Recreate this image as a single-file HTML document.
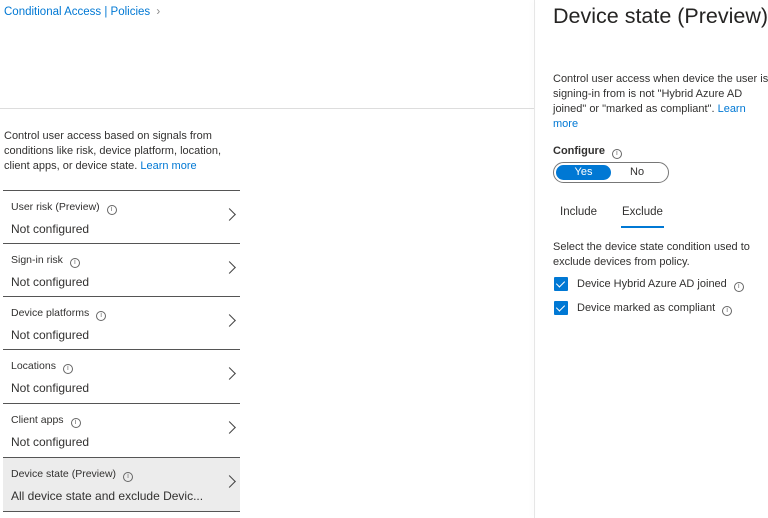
<!DOCTYPE html>
<html><head><style>
*{margin:0;padding:0;box-sizing:border-box}
body{width:768px;height:518px;overflow:hidden;background:#fff;font-family:"Liberation Sans",sans-serif;color:#323130;position:relative;font-size:11px}
.a{position:absolute}
.blue{color:#0078d4}
.i{display:inline-block;width:10px;height:10px;border:1px solid #666;border-radius:50%;font-size:7px;line-height:8px;text-align:center;color:#666;margin-left:7px;vertical-align:-1px}
.row{position:absolute;left:3px;width:237px;height:53px;border-top:1px solid #555}
.row .t{position:absolute;left:8px;top:10px;font-size:10.5px;color:#323130}
.row .v{position:absolute;left:8px;top:31px;font-size:12px;color:#323130}
.row .c{position:absolute;right:6px;top:19px;width:9px;height:9px;border-right:1.3px solid #444;border-top:1.3px solid #444;transform:rotate(45deg)}
.cb{display:inline-block;width:14px;height:14px;background:#0078d4;border-radius:1px;position:relative;vertical-align:middle;margin-right:9px}
.cb:after{content:"";position:absolute;left:4px;top:2px;width:4px;height:7px;border-right:1.3px solid #fff;border-bottom:1.3px solid #fff;transform:rotate(45deg)}
</style></head><body>
<div class="a blue" style="left:4px;top:6px;font-size:11.5px">Conditional Access | Policies <span style="color:#888;margin-left:3px">&#x203A;</span></div>
<div class="a" style="left:0;top:108px;width:534px;height:1px;background:#ddd"></div>
<div class="a" style="left:4px;top:129px;width:235px;font-size:11px;line-height:15px">Control user access based on signals from conditions like risk, device platform, location, client apps, or device state. <span class="blue">Learn more</span></div>
<div class="row" style="top:190px"><div class="t">User risk (Preview)<span class="i">i</span></div><div class="v">Not configured</div><div class="c"></div></div>
<div class="row" style="top:243px"><div class="t">Sign-in risk<span class="i">i</span></div><div class="v">Not configured</div><div class="c"></div></div>
<div class="row" style="top:296px"><div class="t">Device platforms<span class="i">i</span></div><div class="v">Not configured</div><div class="c"></div></div>
<div class="row" style="top:349px"><div class="t">Locations<span class="i">i</span></div><div class="v">Not configured</div><div class="c"></div></div>
<div class="row" style="top:403px"><div class="t">Client apps<span class="i">i</span></div><div class="v">Not configured</div><div class="c"></div></div>
<div class="row" style="top:457px;background:#ececec;border-bottom:1px solid #555;height:55px"><div class="t">Device state (Preview)<span class="i">i</span></div><div class="v">All device state and exclude Devic...</div><div class="c"></div></div>
<div class="a" style="left:534px;top:0;width:1px;height:518px;background:#e6e6e6;box-shadow:-2px 0 4px rgba(0,0,0,.05)"></div>
<div class="a" style="left:553px;top:4px;font-size:21.5px;color:#252423;white-space:nowrap">Device state (Preview)</div>
<div class="a" style="left:553px;top:72px;font-size:11px;line-height:15px;white-space:nowrap">Control user access when device the user is<br>signing-in from is not "Hybrid Azure AD<br>joined" or "marked as compliant". <span class="blue">Learn</span><br><span class="blue">more</span></div>
<div class="a" style="left:553px;top:145px;font-size:11px;font-weight:bold;color:#323130">Configure<span class="i" style="font-weight:normal">i</span></div>
<div class="a" style="left:553px;top:162px;width:116px;height:21px;border:1px solid #777;border-radius:11px">
<div class="a" style="left:2px;top:2px;width:55px;height:15px;background:#0078d4;border-radius:8px;color:#fff;text-align:center;line-height:15px;font-size:11px">Yes</div>
<div class="a" style="left:76px;top:2px;line-height:15px;font-size:11px">No</div></div>
<div class="a" style="left:560px;top:206px;font-size:11.5px">Include</div>
<div class="a" style="left:622px;top:206px;font-size:11.5px">Exclude</div>
<div class="a" style="left:621px;top:226px;width:43px;height:2px;background:#0078d4"></div>
<div class="a" style="left:553px;top:240px;width:220px;font-size:11px;line-height:15px">Select the device state condition used to exclude devices from policy.</div>
<div class="a" style="left:554px;top:277px;font-size:11px"><span class="cb"></span>Device Hybrid Azure AD joined<span class="i">i</span></div>
<div class="a" style="left:554px;top:301px;font-size:11px"><span class="cb"></span>Device marked as compliant<span class="i">i</span></div>
</body></html>
